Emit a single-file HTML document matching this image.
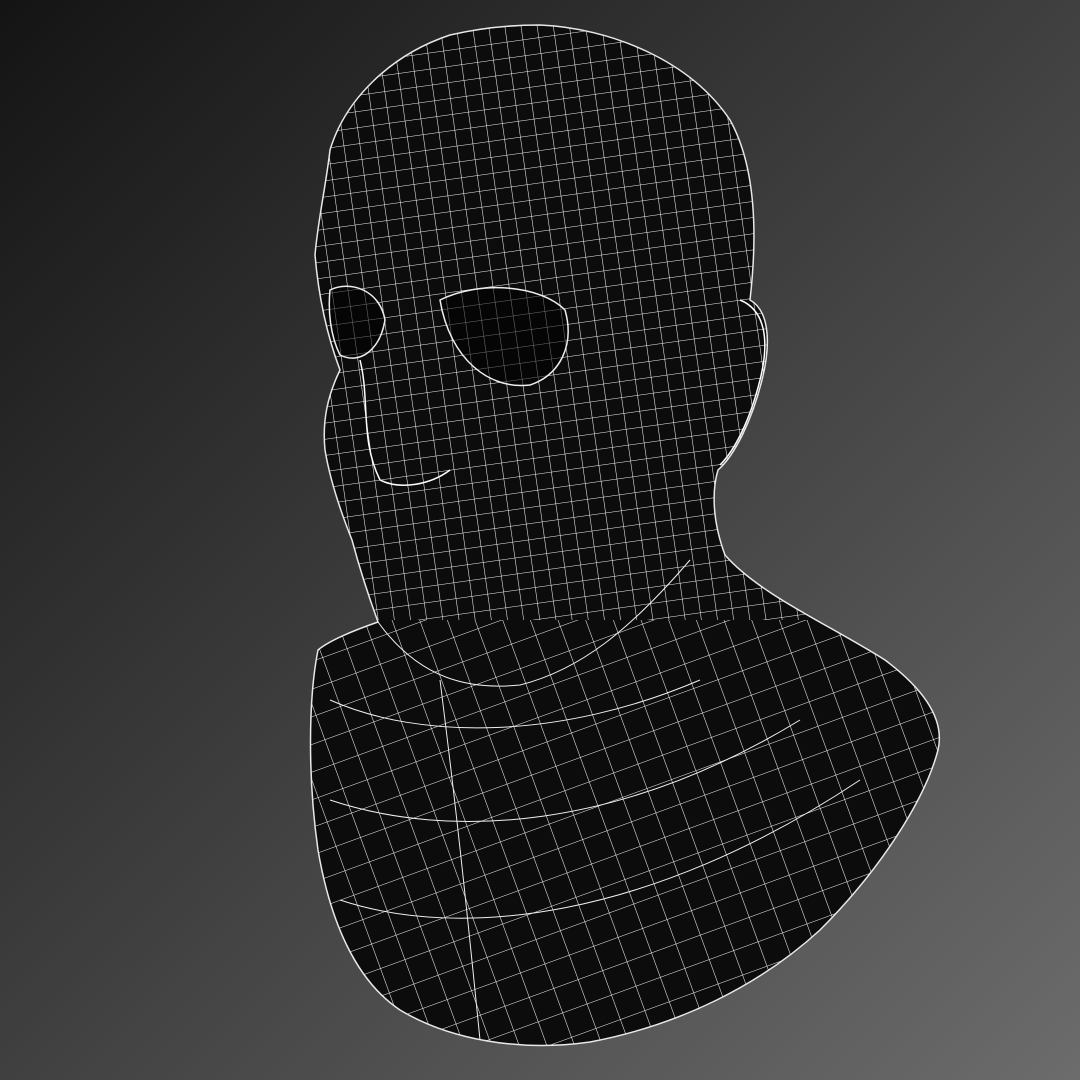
<!DOCTYPE html>
<html><head><meta charset="utf-8"><style>
html,body{margin:0;padding:0;width:1080px;height:1080px;overflow:hidden;background:#333}
svg{display:block}
</style></head><body>
<svg width="1080" height="1080" viewBox="0 0 1080 1080" xmlns="http://www.w3.org/2000/svg">
<defs>
<linearGradient id="bg" x1="0" y1="0" x2="1" y2="1">
<stop offset="0" stop-color="#141414"/>
<stop offset="0.5" stop-color="#404040"/>
<stop offset="1" stop-color="#6c6c6c"/>
</linearGradient>
<pattern id="grid" width="16" height="16" patternUnits="userSpaceOnUse" patternTransform="rotate(-8)">
<path d="M0 0H16M0 0V16" stroke="#f2f2f2" stroke-width="1.1" fill="none"/>
</pattern>
<pattern id="grid2" width="26" height="26" patternUnits="userSpaceOnUse" patternTransform="rotate(-20)">
<path d="M0 0H26M0 0V26" stroke="#f2f2f2" stroke-width="1.1" fill="none"/>
</pattern>
<clipPath id="head">
<path id="hp" d="M540 25 C610 28 690 60 730 120 C755 165 758 230 750 300 C768 310 772 340 762 380 C752 420 735 455 718 470 C712 490 712 520 725 555 C760 595 830 625 885 660 C925 690 945 720 938 750 C925 800 880 870 820 930 C760 985 680 1025 590 1042 C520 1052 450 1040 400 1010 C355 980 330 920 318 850 C308 780 308 700 318 650 C330 640 355 630 378 622 C370 600 360 570 352 540 C340 510 330 480 325 450 C322 420 328 395 340 370 C325 330 318 290 315 255 C318 220 326 185 330 150 C345 100 390 55 450 35 C480 28 510 25 540 25 Z"/>
</clipPath>
</defs>
<rect width="1080" height="1080" fill="url(#bg)"/>
<use href="#hp" fill="#0c0c0c"/>
<g clip-path="url(#head)">
<rect x="300" y="0" width="700" height="620" fill="url(#grid)"/>
<rect x="300" y="620" width="700" height="460" fill="url(#grid2)"/>
<path d="M440 300 C480 280 540 285 565 310 C575 345 560 375 530 385 C490 390 450 360 440 300Z" fill="#000" fill-opacity="0.55" stroke="#eee" stroke-width="1.5"/>
<path d="M330 290 C350 280 380 290 385 320 C380 350 360 365 340 355 C330 335 328 310 330 290Z" fill="#000" fill-opacity="0.55" stroke="#eee" stroke-width="1.5"/>
<path d="M360 360 C370 400 360 440 380 480 C400 490 430 485 450 470" fill="none" stroke="#fff" stroke-width="1.5"/>
<path d="M740 300 C765 310 770 340 760 380 C750 420 735 450 720 465" fill="none" stroke="#fff" stroke-width="1.5"/>
<g fill="none" stroke="#f0f0f0" stroke-width="1">
<path d="M378 622 C420 680 470 690 520 685 C580 670 630 630 690 560"/>
<path d="M440 680 C450 760 460 840 480 1040"/>
<path d="M330 700 C420 740 560 740 700 680"/>
<path d="M330 800 C450 840 620 830 800 720"/>
<path d="M340 900 C460 940 650 920 860 780"/>
</g>
</g>
<use href="#hp" fill="none" stroke="#e8e8e8" stroke-width="1.5"/>
</svg>
</body></html>
